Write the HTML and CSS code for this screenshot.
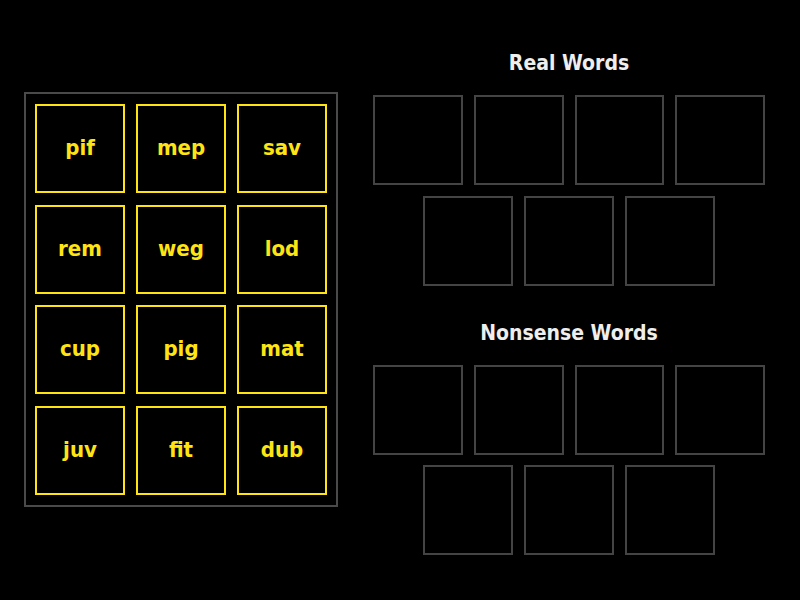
FILE: index.html
```html
<!DOCTYPE html>
<html>
<head>
<meta charset="utf-8">
<link rel="stylesheet" href="styles.css">
</head>
<body>
<div class="page">
  <div class="pool">
    <div class="tile">pif</div>
    <div class="tile">mep</div>
    <div class="tile">sav</div>
    <div class="tile">rem</div>
    <div class="tile">weg</div>
    <div class="tile">lod</div>
    <div class="tile">cup</div>
    <div class="tile">pig</div>
    <div class="tile">mat</div>
    <div class="tile">juv</div>
    <div class="tile">fit</div>
    <div class="tile">dub</div>
  </div>
  <div class="groups">
    <div class="group">
      <div class="title">Real Words</div>
      <div class="slots">
        <div class="row"><div class="slot"></div><div class="slot"></div><div class="slot"></div><div class="slot"></div></div>
        <div class="row"><div class="slot"></div><div class="slot"></div><div class="slot"></div></div>
      </div>
    </div>
    <div class="group second">
      <div class="title">Nonsense Words</div>
      <div class="slots">
        <div class="row"><div class="slot"></div><div class="slot"></div><div class="slot"></div><div class="slot"></div></div>
        <div class="row"><div class="slot"></div><div class="slot"></div><div class="slot"></div></div>
      </div>
    </div>
  </div>
</div>
</body>
</html>
```

FILE: styles.css
```css
html, body {
  margin: 0;
  padding: 0;
  background: #000;
  width: 800px;
  height: 600px;
  overflow: hidden;
  font-family: "DejaVu Sans Condensed", "DejaVu Sans", sans-serif;
  font-weight: bold;
}
.page {
  display: flex;
  align-items: flex-start;
  padding-left: 24px;
}
.pool {
  margin-top: 92px;
  border: 2px solid #4a4a4a;
  padding: 10px 9px;
  display: grid;
  grid-template-columns: repeat(3, 90px);
  grid-auto-rows: 89px;
  column-gap: 11px;
  row-gap: 11.7px;
}
.tile {
  box-sizing: border-box;
  border: 2px solid #ffe414;
  color: #ffe414;
  font-size: 22px;
  display: flex;
  align-items: center;
  justify-content: center;
  padding-bottom: 2px;
}
.groups {
  margin-left: 35px;
  width: 392px;
  padding-top: 48px;
  display: flex;
  flex-direction: column;
}
.group.second {
  margin-top: 32px;
}
.title {
  height: 30px;
  line-height: 30px;
  text-align: center;
  color: #eeeeee;
  font-size: 21px;
  margin-bottom: 17px;
}
.slots {
  display: flex;
  flex-direction: column;
  gap: 11px;
}
.second .slots {
  gap: 10px;
}
.row {
  display: flex;
  justify-content: center;
  gap: 11px;
}
.slot {
  box-sizing: border-box;
  width: 90px;
  height: 90px;
  border: 2px solid #444;
}
```
